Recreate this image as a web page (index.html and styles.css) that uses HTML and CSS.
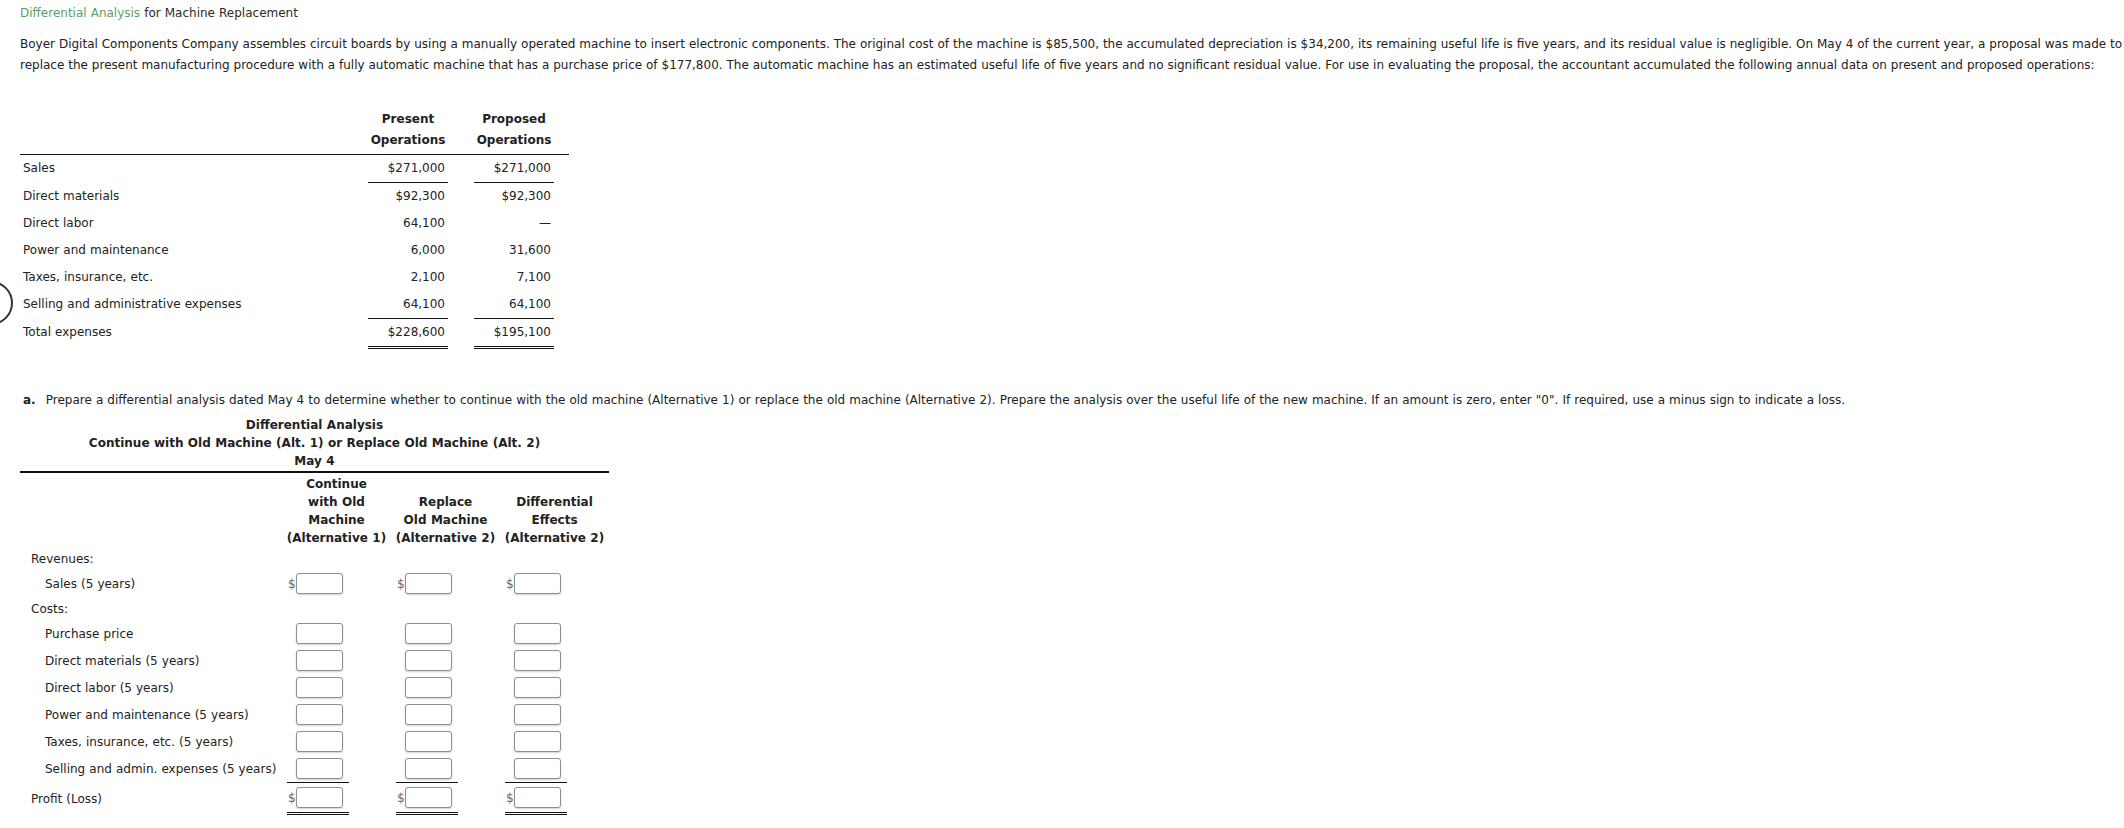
FILE: index.html
```html
<!DOCTYPE html>
<html lang="en">
<head>
  <meta charset="UTF-8">
  <title>Differential Analysis for Machine Replacement</title>
  <link rel="stylesheet" href="styles.css">
</head>
<body>

  <div class="page">
    <h1 class="title"><span class="topic">Differential Analysis</span> for Machine Replacement</h1>

    <p class="intro">Boyer Digital Components Company assembles circuit boards by using a manually operated machine to insert electronic components. The original cost of the machine is $85,500, the accumulated depreciation is $34,200, its remaining useful life is five years, and its residual value is negligible. On May 4 of the current year, a proposal was made to replace the present manufacturing procedure with a fully automatic machine that has a purchase price of $177,800. The automatic machine has an estimated useful life of five years and no significant residual value. For use in evaluating the proposal, the accountant accumulated the following annual data on present and proposed operations:</p>

    <!-- Present vs proposed operations -->
    <div class="ops">
      <div class="ops-row ops-head">
        <span></span>
        <span>Present<br>Operations</span>
        <span>Proposed<br>Operations</span>
      </div>
      <div class="ops-row">
        <span class="ops-label">Sales</span>
        <span class="num ruled">$271,000</span>
        <span class="num ruled">$271,000</span>
      </div>
      <div class="ops-row">
        <span class="ops-label">Direct materials</span>
        <span class="num">$92,300</span>
        <span class="num">$92,300</span>
      </div>
      <div class="ops-row">
        <span class="ops-label">Direct labor</span>
        <span class="num">64,100</span>
        <span class="num">&mdash;</span>
      </div>
      <div class="ops-row">
        <span class="ops-label">Power and maintenance</span>
        <span class="num">6,000</span>
        <span class="num">31,600</span>
      </div>
      <div class="ops-row">
        <span class="ops-label">Taxes, insurance, etc.</span>
        <span class="num">2,100</span>
        <span class="num">7,100</span>
      </div>
      <div class="ops-row">
        <span class="ops-label">Selling and administrative expenses</span>
        <span class="num ruled">64,100</span>
        <span class="num ruled">64,100</span>
      </div>
      <div class="ops-row total">
        <span class="ops-label">Total expenses</span>
        <span class="num">$228,600</span>
        <span class="num">$195,100</span>
      </div>
    </div>

    <p class="task"><b class="part">a.</b> Prepare a differential analysis dated May 4 to determine whether to continue with the old machine (Alternative 1) or replace the old machine (Alternative 2). Prepare the analysis over the useful life of the new machine. If an amount is zero, enter "0". If required, use a minus sign to indicate a loss.</p>

    <!-- Differential analysis worksheet -->
    <div class="diff">
      <div class="diff-caption">Differential Analysis<br>Continue with Old Machine (Alt. 1) or Replace Old Machine (Alt. 2)<br>May 4</div>

      <div class="diff-row diff-head">
        <span></span>
        <span>Continue<br>with Old<br>Machine<br>(Alternative 1)</span>
        <span>Replace<br>Old Machine<br>(Alternative 2)</span>
        <span>Differential<br>Effects<br>(Alternative 2)</span>
      </div>

      <div class="diff-row group">
        <span class="diff-label">Revenues:</span>
      </div>
      <div class="diff-row entry">
        <span class="diff-label item">Sales (5 years)</span>
        <span class="slot"><span class="cur">$</span><input type="text"></span>
        <span class="slot"><span class="cur">$</span><input type="text"></span>
        <span class="slot"><span class="cur">$</span><input type="text"></span>
      </div>

      <div class="diff-row group">
        <span class="diff-label">Costs:</span>
      </div>
      <div class="diff-row entry">
        <span class="diff-label item">Purchase price</span>
        <span class="slot"><span class="cur"></span><input type="text"></span>
        <span class="slot"><span class="cur"></span><input type="text"></span>
        <span class="slot"><span class="cur"></span><input type="text"></span>
      </div>
      <div class="diff-row entry">
        <span class="diff-label item">Direct materials (5 years)</span>
        <span class="slot"><span class="cur"></span><input type="text"></span>
        <span class="slot"><span class="cur"></span><input type="text"></span>
        <span class="slot"><span class="cur"></span><input type="text"></span>
      </div>
      <div class="diff-row entry">
        <span class="diff-label item">Direct labor (5 years)</span>
        <span class="slot"><span class="cur"></span><input type="text"></span>
        <span class="slot"><span class="cur"></span><input type="text"></span>
        <span class="slot"><span class="cur"></span><input type="text"></span>
      </div>
      <div class="diff-row entry">
        <span class="diff-label item">Power and maintenance (5 years)</span>
        <span class="slot"><span class="cur"></span><input type="text"></span>
        <span class="slot"><span class="cur"></span><input type="text"></span>
        <span class="slot"><span class="cur"></span><input type="text"></span>
      </div>
      <div class="diff-row entry">
        <span class="diff-label item">Taxes, insurance, etc. (5 years)</span>
        <span class="slot"><span class="cur"></span><input type="text"></span>
        <span class="slot"><span class="cur"></span><input type="text"></span>
        <span class="slot"><span class="cur"></span><input type="text"></span>
      </div>
      <div class="diff-row entry">
        <span class="diff-label item">Selling and admin. expenses (5 years)</span>
        <span class="slot under"><span class="cur"></span><input type="text"></span>
        <span class="slot under"><span class="cur"></span><input type="text"></span>
        <span class="slot under"><span class="cur"></span><input type="text"></span>
      </div>

      <div class="diff-row entry">
        <span class="diff-label">Profit (Loss)</span>
        <span class="slot dbl"><span class="cur">$</span><input type="text"></span>
        <span class="slot dbl"><span class="cur">$</span><input type="text"></span>
        <span class="slot dbl"><span class="cur">$</span><input type="text"></span>
      </div>
    </div>

    <div class="ring"></div>
  </div>

</body>
</html>
```

FILE: styles.css
```css
* {
  margin: 0;
  padding: 0;
  box-sizing: border-box;
}

body {
  font-family: "DejaVu Sans", Verdana, sans-serif;
  font-size: 12px;
  word-spacing: 0.25px; /* Verdana has slightly wider spaces */
  color: #222;
  background: #fff;
}

.page {
  position: relative;
  padding: 3px 0 20px 20px;
}

.title {
  font-size: 12px;
  font-weight: normal;
  line-height: 21px;
  color: #2a2a2a;
}

.topic {
  color: #5f9e5f;
}

.intro {
  margin-top: 10px;
  line-height: 21px;
  word-spacing: 0.1px;
}

/* present / proposed table */
.ops {
  width: 549px;
  margin-top: 33px;
}

.ops-row {
  display: grid;
  grid-template-columns: 322px 80px 80px;
  column-gap: 26px;
}

.ops-row > span {
  line-height: 27px;
}

.ops-head {
  font-weight: bold;
  text-align: center;
  padding-bottom: 3px;
  border-bottom: 1px solid #111;
}

.ops-head > span {
  line-height: 21px;
}

.ops-label {
  padding-left: 3px;
}

.num {
  text-align: right;
  padding-right: 3px;
}

.ruled {
  border-bottom: 1px solid #111;
}

.total .num {
  border-bottom: 3px double #111;
}

/* part a */
.task {
  margin-top: 41px;
  line-height: 21px;
  padding-left: 3px;
}

.part {
  margin-right: 6px;
}

.diff {
  width: 589px;
  margin-top: 5px;
}

.diff-caption {
  text-align: center;
  font-weight: bold;
  line-height: 18px;
  padding-bottom: 1px;
}

.diff-row {
  display: grid;
  grid-template-columns: 262px 109px 109px 109px;
}

.diff-head {
  border-top: 2px solid #111;
  padding-top: 2px;
  font-weight: bold;
  line-height: 18px;
  text-align: center;
}

.diff-head > span {
  align-self: end;
}

.group {
  height: 23px;
  align-items: center;
}

.entry {
  align-items: center;
}

.diff-label {
  padding-left: 11px;
}

.diff-label.item {
  padding-left: 25px;
}

.slot {
  display: flex;
  align-items: center;
  width: 62px;
  margin-left: 5px;
  padding: 3px 0;
}

.slot.under {
  border-bottom: 1px solid #111;
}

.slot.dbl {
  padding: 4px 0;
  border-bottom: 3px double #111;
}

.cur {
  width: 9px;
  padding-left: 1px;
  color: #666;
  font-size: 12px;
}

.slot input {
  width: 47px;
  height: 21px;
  border: 1px solid #8f8f8f;
  border-radius: 3px;
  background: #fff;
  box-shadow: 0 1px 2px rgba(0, 0, 0, 0.18);
  font: inherit;
  outline: none;
}

/* pointer ring at the left edge */
.ring {
  position: absolute;
  left: -31px;
  top: 281px;
  width: 44px;
  height: 44px;
  border: 2.5px solid #333;
  border-radius: 50%;
}
```
